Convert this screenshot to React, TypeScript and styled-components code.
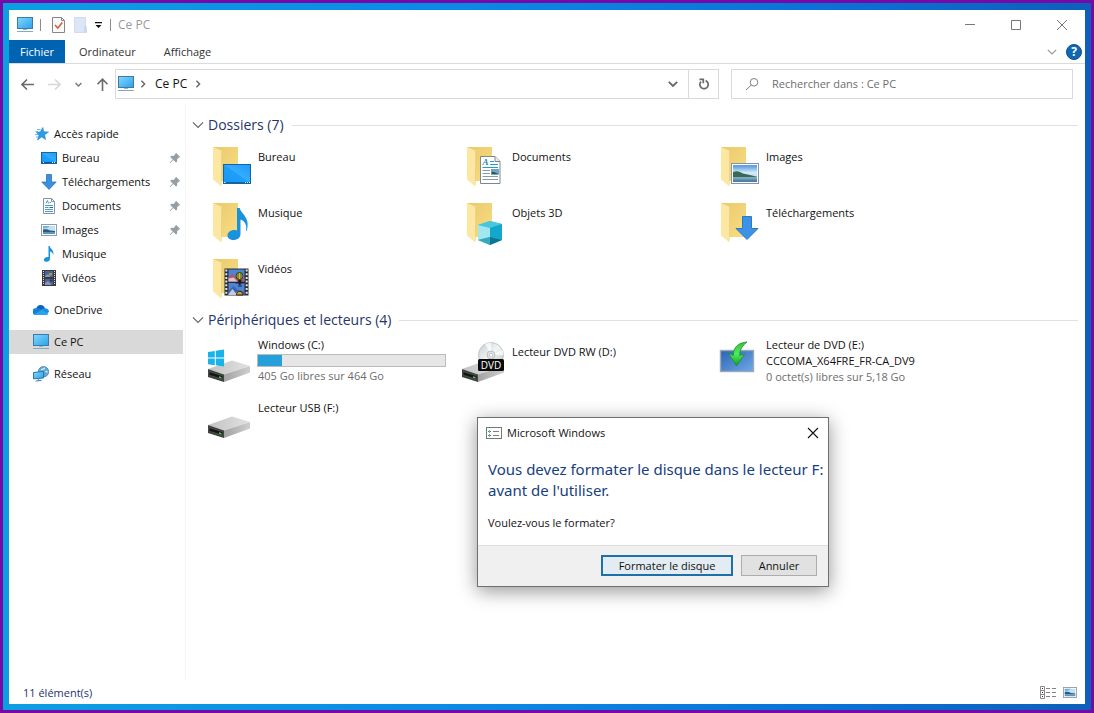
import React from "react";
import styled, { createGlobalStyle } from "styled-components";

const GlobalStyle = createGlobalStyle`
  *, *::before, *::after { box-sizing: border-box; }
  body { margin: 0; }
  body, button, input { font-family: "Open Sans", "Noto Sans", sans-serif; font-size: 11px; line-height: 16px; color: #111; }
  button { border: 0; padding: 0; background: none; }
  h1, h2, p, ul { margin: 0; padding: 0; font-weight: 400; }
  svg { display: block; flex: none; }
`;

/* ---------- frame ---------- */

const Desktop = styled.div`
  display: flex;
  min-height: 100vh;
  padding: 7px 6px 6px;
  border: 3px solid #750aa6;
  background: linear-gradient(90deg, #0b9fe2 0%, #0a8be6 40%, #0a72d8 75%, #0d5fba 100%);
`;

const Window = styled.main`
  position: relative;
  display: flex;
  flex: 1;
  flex-direction: column;
  min-width: 0;
  background: #fff;
`;

const TitleBar = styled.header`
  display: flex;
  align-items: center;
  height: 30px;
  padding-left: 8px;
`;

const TitleSeparator = styled.span`
  width: 1px;
  height: 12px;
  background: #8c8c8c;
`;

const AppMark = styled.span`
  padding-right: 7px;
`;

const QuickTools = styled.div`
  display: flex;
  align-items: center;
  gap: 7px;
  padding: 0 7px 0 11px;
`;

const WindowTitle = styled.h1`
  flex: 1;
  padding-left: 7px;
  font-size: 12px;
  color: #999;
`;

const CaptionButton = styled.button`
  display: grid;
  place-items: center;
  width: 46px;
  height: 28px;
  color: #777;
`;

const Ribbon = styled.nav`
  display: flex;
  align-items: stretch;
  height: 24px;
  border-bottom: 1px solid #dadbdc;
`;

const RibbonTab = styled.button<{ $active?: boolean }>`
  min-width: 56px;
  padding: ${(p) => (p.$active ? "0" : "0 14px")};
  background: ${(p) => (p.$active ? "#0063b1" : "transparent")};
  color: ${(p) => (p.$active ? "#fff" : "#333")};
`;

const RibbonEnd = styled.div`
  display: flex;
  align-items: center;
  gap: 9px;
  margin-left: auto;
  padding-right: 3px;
`;

/* ---------- address row ---------- */

const AddressRow = styled.div`
  display: flex;
  align-items: center;
  gap: 12px;
  height: 40px;
  padding: 0 12px;
`;

const NavButtons = styled.div`
  display: flex;
  align-items: center;
  gap: 14px;
  margin-right: -6px;
`;

const AddressBox = styled.div`
  display: flex;
  flex: 1;
  align-items: center;
  height: 30px;
  padding-left: 2px;
  border: 1px solid #d9d9d9;
`;

const CrumbMark = styled.span`
  padding-left: 5px;
`;

const Crumb = styled.button`
  padding: 0 2px 0 8px;
  font-size: 12px;
`;

const AddressSpacer = styled.span`
  flex: 1;
`;

const AddressAction = styled.button<{ $divided?: boolean }>`
  display: grid;
  place-items: center;
  width: 30px;
  height: 28px;
  border-left: ${(p) => (p.$divided ? "1px solid #d9d9d9" : "0")};
`;

const SearchBox = styled.label`
  display: flex;
  flex: 0 1 342px;
  align-items: center;
  gap: 12px;
  height: 30px;
  padding-left: 13px;
  border: 1px solid #d9d9d9;
`;

const SearchInput = styled.input`
  flex: 1;
  min-width: 0;
  padding: 0;
  border: 0;
  outline: 0;
  background: transparent;
  &::placeholder { color: #6d6d6d; opacity: 1; }
`;

/* ---------- body ---------- */

const Body = styled.div`
  display: flex;
  flex: 1;
`;

const Sidebar = styled.aside`
  flex: none;
  width: 177px;
  padding: 18px 2px 0 0;
  border-right: 1px solid #f5f5f5;
`;

const SideGroup = styled.ul`
  margin-bottom: 8px;
  list-style: none;
`;

const SideLink = styled.a<{ $nested?: boolean; $selected?: boolean }>`
  display: flex;
  align-items: center;
  gap: 5px;
  height: 24px;
  padding: 0 2px 0 ${(p) => (p.$nested ? "32px" : "24px")};
  background: ${(p) => (p.$selected ? "#d9d9d9" : "transparent")};
  color: #111;
  text-decoration: none;
`;

const SideLabel = styled.span`
  flex: 1;
  white-space: nowrap;
`;

const Content = styled.section`
  flex: 1;
  min-width: 0;
  padding: 11px 7px 0 6px;
`;

const Group = styled.section`
  margin-bottom: 1px;
`;

const GroupHeader = styled.h2`
  display: flex;
  align-items: center;
  gap: 4px;
  height: 20px;
  margin-bottom: 6px;
  font-size: 14px;
  line-height: 20px;
  color: #26346b;
  &::after {
    content: "";
    flex: 1;
    height: 1px;
    margin-left: 4px;
    background: #e0e0e0;
  }
`;

const TileGrid = styled.ul`
  display: grid;
  grid-template-columns: repeat(auto-fill, 254px);
  grid-auto-rows: 56px;
  padding-left: 14px;
  list-style: none;
`;

const Tile = styled.li`
  display: flex;
  gap: 4px;
`;

const TileText = styled.div<{ $multi?: boolean }>`
  flex: 1;
  padding: ${(p) => (p.$multi ? "1px" : "8px")} 12px 0 0;
`;

const TileLine = styled.p<{ $muted?: boolean }>`
  color: ${(p) => (p.$muted ? "#6d6d6d" : "#111")};
  white-space: nowrap;
`;

const Meter = styled.div`
  width: 189px;
  height: 13px;
  margin: 1px 0 1px -1px;
  border: 1px solid #bcbcbc;
  background: #e6e6e6;
`;

const MeterFill = styled.div`
  height: 100%;
  background: #26a0da;
`;

const StatusBar = styled.footer`
  display: flex;
  align-items: center;
  gap: 7px;
  height: 23px;
  padding: 0 8px 0 14px;
  color: #26346b;
`;

const StatusText = styled.span`
  flex: 1;
`;

/* ---------- dialog ---------- */

const Dialog = styled.div`
  position: absolute;
  top: 407px;
  left: 468px;
  width: 352px;
  border: 1px solid #6f6f6f;
  background: #fff;
  box-shadow: 0 4px 18px rgba(0, 0, 0, 0.42);
`;

const DialogTitle = styled.div`
  display: flex;
  align-items: center;
  gap: 5px;
  height: 30px;
  padding: 0 8px;
`;

const DialogTitleText = styled.span`
  flex: 1;
`;

const DialogBody = styled.div`
  display: flex;
  flex-direction: column;
  gap: 14px;
  height: 97px;
  padding: 11px 0 0 10px;
`;

const DialogInstruction = styled.h2`
  font-family: "Noto Sans", "Open Sans", sans-serif;
  font-size: 15px;
  line-height: 21px;
  color: #17407f;
`;

const DialogFooter = styled.div`
  display: flex;
  justify-content: flex-end;
  gap: 8px;
  padding: 9px 11px 10px;
  border-top: 1px solid #dfdfdf;
  background: #f0f0f0;
`;

const DialogButton = styled.button<{ $primary?: boolean }>`
  width: ${(p) => (p.$primary ? "132px" : "76px")};
  height: 21px;
  border: ${(p) => (p.$primary ? "2px solid #1f6fa8" : "1px solid #adadad")};
  background: ${(p) => (p.$primary ? "#e3ecf3" : "#e1e1e1")};
`;

/* ---------- icons ---------- */

const HiddenDefs = styled.svg`
  position: absolute;
`;

const SharedDefs = () => (
  <HiddenDefs width="0" height="0" aria-hidden="true">
    <defs>
      <linearGradient id="screen" x1="0" y1="0" x2="1" y2="1">
        <stop offset="0" stopColor="#8ad6fb" />
        <stop offset="0.5" stopColor="#55bdf5" />
        <stop offset="1" stopColor="#2f9fe6" />
      </linearGradient>
      <linearGradient id="desk" x1="0" y1="1" x2="1" y2="0">
        <stop offset="0" stopColor="#1597f4" />
        <stop offset="0.5" stopColor="#1e9ffc" />
        <stop offset="0.52" stopColor="#35acff" />
        <stop offset="1" stopColor="#1c9cfb" />
      </linearGradient>
      <linearGradient id="folderBack" x1="0" y1="0" x2="1" y2="1">
        <stop offset="0" stopColor="#e9c96c" />
        <stop offset="1" stopColor="#fadd83" />
      </linearGradient>
      <linearGradient id="folderFlap" x1="0" y1="0" x2="1" y2="1">
        <stop offset="0" stopColor="#fde79f" />
        <stop offset="1" stopColor="#fbe7a6" />
      </linearGradient>
      <linearGradient id="sky" x1="0" y1="0" x2="0" y2="1">
        <stop offset="0" stopColor="#4a93dc" />
        <stop offset="0.45" stopColor="#d4ebf8" />
        <stop offset="1" stopColor="#a9cfe6" />
      </linearGradient>
      <linearGradient id="sea" x1="0" y1="0" x2="0" y2="1">
        <stop offset="0" stopColor="#8db8cf" />
        <stop offset="1" stopColor="#3b6f96" />
      </linearGradient>
      <linearGradient id="driveTop" x1="0" y1="0" x2="1" y2="0">
        <stop offset="0" stopColor="#c2c2c2" />
        <stop offset="1" stopColor="#e2e2e2" />
      </linearGradient>
      <linearGradient id="driveSide" x1="0" y1="0" x2="1" y2="0">
        <stop offset="0" stopColor="#a2a2a2" />
        <stop offset="1" stopColor="#cfcfcf" />
      </linearGradient>
      <linearGradient id="disc" x1="0" y1="0" x2="1" y2="1">
        <stop offset="0" stopColor="#c4cccd" />
        <stop offset="0.5" stopColor="#f2f5f5" />
        <stop offset="1" stopColor="#b3c4c2" />
      </linearGradient>
      <linearGradient id="setup" x1="0" y1="0" x2="1" y2="1">
        <stop offset="0" stopColor="#2c63b4" />
        <stop offset="1" stopColor="#6fa9e8" />
      </linearGradient>
      <linearGradient id="green" x1="0" y1="0" x2="0" y2="1">
        <stop offset="0" stopColor="#35c13a" />
        <stop offset="0.5" stopColor="#4fec58" />
        <stop offset="1" stopColor="#0f9a28" />
      </linearGradient>
    </defs>
  </HiddenDefs>
);

const PcIcon = () => (
  <svg width="16" height="16" viewBox="0 0 16 16" aria-hidden="true">
    <rect x="0.5" y="0.5" width="15" height="11" fill="url(#screen)" stroke="#3d7ba6" />
    <path d="M6 12h4v1H6z" fill="#9fb4c2" />
    <path d="M0 14h16v1H0z" fill="#98a5ae" />
    <path d="M3 14h10v.5H3z" fill="#5bb5e8" />
  </svg>
);

const PropertiesIcon = () => (
  <svg width="14" height="16" viewBox="0 0 14 16" aria-hidden="true">
    <path d="M.5.5h9l3 3v12H.5z" fill="#fbfbfb" stroke="#868686" />
    <path d="M9.5.5v3h3" fill="none" stroke="#868686" />
    <path d="M3 8l2.800 3L10.300 5.500" fill="none" stroke="#d2603a" strokeWidth="1.600" />
  </svg>
);

const NewFolderIcon = () => (
  <svg width="14" height="16" viewBox="0 0 14 16" aria-hidden="true">
    <path d="M1.500.5h11V9l1 1v5.500h-12z" fill="#dbe6f6" stroke="#d0dbee" />
    <path d="M12 9v6" stroke="#bccbe4" />
  </svg>
);

const CustomizeIcon = () => (
  <svg width="9" height="8" viewBox="0 0 9 8" aria-hidden="true">
    <path d="M1 1h7v1.200H1zM1.500 4h6L4.500 7z" fill="#111" />
  </svg>
);

const Chevron = ({ color = "#666", size = 9, dir = "down", weight = 1.2 }: { color?: string; size?: number; dir?: "down" | "right"; weight?: number }) => (
  <svg width={size} height={size} viewBox="0 0 10 10" fill="none" stroke={color} strokeWidth={weight} aria-hidden="true">
    <path d={dir === "down" ? "M.8 2.800L5 7l4.200-4.200" : "M3 1l4 4-4 4"} />
  </svg>
);

const Arrow = ({ color, dir }: { color: string; dir: "left" | "right" | "up" }) => (
  <svg width="13" height="13" viewBox="0 0 13 13" fill="none" stroke={color} strokeWidth="1.600" aria-hidden="true">
    {dir === "left" && <path d="M13 6.500H1.200M6 1.500l-5 5 5 5" />}
    {dir === "right" && <path d="M0 6.500h11.800M7 1.500l5 5-5 5" />}
    {dir === "up" && <path d="M6.500 13V1.200M1.500 6.200l5-5 5 5" />}
  </svg>
);

const RefreshIcon = () => (
  <svg width="12" height="12" viewBox="0 0 12 12" fill="none" stroke="#6a6a6a" strokeWidth="1.700" aria-hidden="true">
    <path d="M7.600 2.600A4.200 4.200 0 1 1 3 3.600" />
    <path d="M1.500 1.300h3.800v3.900" />
  </svg>
);

const SearchIcon = () => (
  <svg width="15" height="14" viewBox="0 0 15 14" fill="none" stroke="#808080" aria-hidden="true">
    <circle cx="9" cy="5.300" r="3.800" />
    <path d="M6.300 8L1 13" />
  </svg>
);

const HelpIcon = () => (
  <svg width="16" height="16" viewBox="0 0 16 16" aria-hidden="true">
    <circle cx="8" cy="8" r="7.500" fill="#1167b1" stroke="#0d4f8f" />
    <text x="8" y="12" textAnchor="middle" fontSize="12" fontWeight="700" fill="#fff">?</text>
  </svg>
);

const StarIcon = () => (
  <svg width="16" height="16" viewBox="0 0 16 16" aria-hidden="true">
    <path d="M9.800 1.500l1 4.200 4.700.3-3.800 2.800.8 4.700-3.800-2.600L4.500 14l1.400-4.700L3.500 6.500l3.800-.7z" fill="#2f9be0" stroke="#2389cc" strokeWidth=".6" />
    <path d="M4 3.500h3.500M2.500 5.500H5M2 8.500h3M3 11h2" stroke="#6bbcee" />
  </svg>
);

const DesktopIcon = () => (
  <svg width="16" height="16" viewBox="0 0 16 16" aria-hidden="true">
    <rect x="0.500" y="2.500" width="15" height="11" fill="url(#desk)" stroke="#14659f" />
    <path d="M1 12.500h14" stroke="#0f5a96" />
    <path d="M2 12.500h1M11 12.500h1M13 12.500h1" stroke="#d7efff" />
  </svg>
);

const DownloadIcon = () => (
  <svg width="16" height="16" viewBox="0 0 16 16" aria-hidden="true">
    <path d="M5.500.5h5V8h4.700L8 15.400.8 8h4.700z" fill="#3b8fdc" stroke="#2b74bd" strokeWidth=".8" />
  </svg>
);

const DocumentArt = () => (
  <g>
    <path d="M.5.500h14.500l5 5V27.500H.5z" fill="#fff" stroke="#7d8790" />
    <path d="M15 .5v5h5" fill="#e8ecef" stroke="#7d8790" />
    <text x="2.500" y="9" fontSize="9" fontStyle="italic" fontWeight="700" fontFamily="Liberation Serif, serif" fill="#2a83c0">A</text>
    <path d="M10 5.500h4M10 8.500h8M2.500 11.500h15.500" stroke="#2a9ac9" strokeWidth="1.200" />
    <path d="M2.500 14.500h7.500M2.500 17.500h7.500M2.500 20.500h15.500M2.500 23.500h15.500" stroke="#8a98a4" />
    <rect x="11.500" y="13.500" width="7" height="5" fill="#6ba7d6" stroke="#4a7fae" strokeWidth=".6" />
    <path d="M11.800 18v-2.500l3 .8 3.500 1.700z" fill="#2d5a4f" />
  </g>
);

const DocumentIcon = () => (
  <svg width="16" height="16" viewBox="0 0 16 16" aria-hidden="true">
    <path d="M2.500.5h8l3 3v12h-11z" fill="#fff" stroke="#87929b" />
    <path d="M10.500.5v3h3" fill="none" stroke="#87929b" />
    <path d="M5 5.500L6.500 2.500 7.500 5.500M8.500 4.500h1.500M4 7.500h8M4 9.500h3.500M4 11.500h8M4 13.500h8" fill="none" stroke="#4a9fcd" />
    <path d="M8.500 9.500H12" stroke="#3b5f7c" />
  </svg>
);

const PictureArt = ({ w, h }: { w: number; h: number }) => (
  <svg width={w} height={h} viewBox="0 0 28 20" preserveAspectRatio="none">
    <rect x="0.500" y="0.500" width="27" height="19" fill="#fff" stroke="#8394a5" />
    <rect x="2" y="2" width="24" height="16" fill="url(#sky)" />
    <path d="M2 8.500c4-1.500 7-.5 10 1.500l7 1.500 7 1.500v1H2z" fill="#3a6a55" />
    <path d="M2 13.500h24V18H2z" fill="url(#sea)" />
  </svg>
);

const SmallPicture = ({ w, h }: { w: number; h: number }) => (
  <svg width={w} height={h} viewBox="0 0 16 12" preserveAspectRatio="none" aria-hidden="true">
    <rect x="0.500" y="0.500" width="15" height="11" fill="#fff" stroke="#8f9dab" />
    <rect x="2" y="2" width="12" height="8" fill="#bfe0f5" />
    <path d="M2 2h7L6 4 2 4.500z" fill="#6fb2e6" />
    <path d="M2 5.500c3-.5 5 0 7 1l5 .5v1H2z" fill="#30587a" />
    <path d="M2 8h12v2H2z" fill="#5c93bb" />
  </svg>
);

const PictureIcon = () => <SmallPicture w={16} h={12} />;

const MusicIcon = () => (
  <svg width="16" height="16" viewBox="0 0 16 16" aria-hidden="true">
    <path d="M7.500 0h1.300c.3 3 4.800 4 3.300 9.200-.2-2.200-1.300-3.400-3.100-3.700v7.200c0 1.800-1.500 3.100-3.400 3.100-1.700 0-2.700-.9-2.700-2.100 0-1.500 1.700-2.900 4.600-2.700z" fill="#1a93dd" />
  </svg>
);

const FilmArt = () => (
  <g>
    <path d="M.5.500h24v27H.5z" fill="#2b2b2b" />
    <path d="M2.300 1.500v26M22.700 1.500v26" stroke="#e5e5e5" strokeWidth="2" strokeDasharray="2 1.700" />
    <path d="M4.500 1.500h16v12h-16z" fill="#4c84d6" />
    <path d="M4.500 15h16v12h-16z" fill="#4c84d6" />
    <path d="M4.500 9l4-3 4 4 8 1v2.500h-16z" fill="#b6566a" />
    <path d="M4.500 10.500l5-1 4 4h-9z" fill="#d9c7ce" />
    <path d="M4.500 23l5-5 4 4 7 2v3h-16z" fill="#3c64ac" />
    <path d="M4.500 26l4-5 3 4 3-1v3h-10z" fill="#c7c9db" />
    <circle cx="15.500" cy="8" r="3.500" fill="#e0b92c" stroke="#2f3b1c" />
    <path d="M14 4.500v7M17 4.500v7" stroke="#2d5c23" />
    <path d="M14 12h3.500l-1 5h-1.500z" fill="#18202c" />
    <path d="M11.500 15h8M14 18h4" stroke="#18202c" strokeWidth="1.200" />
    <path d="M12.500 27c0-5 6.500-5 6.500 0z" fill="#dd9a2c" stroke="#222" />
  </g>
);

const VideoIcon = () => (
  <svg width="16" height="16" viewBox="0 0 16 16" aria-hidden="true">
    <path d="M1 0h14v16H1z" fill="#3a3a3a" />
    <path d="M2.500 1v14M13.500 1v14" stroke="#ddd" strokeDasharray="1 1" />
    <path d="M4 1h8v6H4zM4 9h8v6H4z" fill="#4a62a0" />
    <path d="M4 6l3-2 2 2v1H4zM4 13l3-2 3 3v1H4z" fill="#8794bf" />
    <path d="M8 3h3v2.500H8z" fill="#a59a3c" />
    <path d="M9 9.500h2.500v2H9z" fill="#2a3350" />
  </svg>
);

const CloudIcon = () => (
  <svg width="16" height="16" viewBox="0 0 16 16" aria-hidden="true">
    <path d="M3 7.200C3.600 4.600 5.300 3 7.600 3c2 0 3.600 1.200 4.300 3.200l-3.300 4.300-6-2z" fill="#0d62b8" />
    <path d="M3.500 6.300c2-.4 3.500.3 5.300 1.600l-6.600 5A3.300 3.300 0 0 1 3.500 6.300z" fill="#1580d8" />
    <path d="M8.200 8c1-1.500 2.700-2.200 4.400-1.700 2.200.3 3.400 1.800 3.400 3.600L13 12z" fill="#1a8fe4" />
    <path d="M1.600 12.200L8.700 7.800l6.700 3.900c-.5.800-1.300 1.300-2.400 1.300H3.500c-.8 0-1.400-.3-1.900-.8z" fill="#2aa4ee" />
  </svg>
);

const NetworkIcon = () => (
  <svg width="16" height="16" viewBox="0 0 16 16" aria-hidden="true">
    <circle cx="10.500" cy="5.700" r="5.200" fill="#5fa9d3" stroke="#4387b3" strokeWidth=".8" />
    <path d="M8 3.500c2 .3 2.500-1 4-1.300M12.500 5c1 1 1.500.8 2.200 1" fill="none" stroke="#d3ecf8" strokeWidth="1.300" />
    <path d="M.5 6.500l10-1v6.500l-10 .800z" fill="url(#screen)" stroke="#2675ab" />
    <path d="M5.500 12.500v2M2.500 15l6-.6" stroke="#4d92bf" strokeWidth="1.200" />
  </svg>
);

const PinIcon = () => (
  <svg width="12" height="12" viewBox="0 0 12 12" aria-hidden="true">
    <path d="M7 .8L11.200 5l-1.300.5-1.800 1.800.1 2.400-1.200.9-2.600-2.600L1 11.300l-.5-.5L3.800 7.500 1.200 5l1-1.200 2.400.1 1.800-1.800z" fill="#959fa6" />
  </svg>
);

const FolderTile = ({ children }: { children: React.ReactNode }) => (
  <svg width="48" height="48" viewBox="0 0 48 48" aria-hidden="true">
    <path d="M7 6h25v34H14z" fill="url(#folderBack)" />
    <path d="M7 6l9 4v32.500l-.8 3L7 38.500z" fill="url(#folderFlap)" />
    <path d="M15.500 10v30" stroke="#e8cd80" strokeWidth=".8" />
    {children}
  </svg>
);

const BureauTile = () => (
  <FolderTile>
    <rect x="17.500" y="23.500" width="27" height="19" fill="url(#desk)" stroke="#15649b" />
    <path d="M18 41.500h26" stroke="#12639e" />
    <path d="M18 41.500h1.500M39 41.500h1M41 41.500h1M43 41.500h1" stroke="#d8f0ff" />
  </FolderTile>
);

const DocumentsTile = () => (
  <FolderTile>
    <g transform="translate(20 15)"><DocumentArt /></g>
  </FolderTile>
);

const ImagesTile = () => (
  <FolderTile>
    <g transform="translate(17 22)"><PictureArt w={28} h={21} /></g>
  </FolderTile>
);

const MusiqueTile = () => (
  <FolderTile>
    <path d="M31 11h2.800c.5 5 10.500 9 7.300 21.500-.2 1-.8 1.500-1.200 2 1.300-6.500-1-10.500-5.400-12V37c0 3.800-3.200 6-7 6-3.500 0-6-1.700-6-4.500 0-3.500 4.300-6.500 9.500-5z" fill="#1a93dd" />
  </FolderTile>
);

const Objets3dTile = () => (
  <FolderTile>
    <path d="M18 28l12-4 12 3v16l-12 5-12-5z" fill="#35c3dd" />
    <path d="M18 28l12-4 12 3-12 4z" fill="#48c6dc" />
    <path d="M18 28l12 3v9l-12 3z" fill="#a2e6ee" />
    <path d="M30 31l12-4v16l-12-3z" fill="#12a8cd" />
    <path d="M18 43l12-3v8z" fill="#35a9bd" />
    <path d="M30 40l12 3-12 5z" fill="#0d7590" />
  </FolderTile>
);

const DownloadsTile = () => (
  <FolderTile>
    <path d="M28.500 19.500h9v12h6.500L33 42.500l-11-11h6.500z" fill="#3b92e6" stroke="#2f78c2" />
  </FolderTile>
);

const VideosTile = () => (
  <FolderTile>
    <g transform="translate(18 15)"><FilmArt /></g>
  </FolderTile>
);

const DriveArt = () => (
  <g>
    <path d="M2 33l24-8.500 18 5.500-26 8.500z" fill="url(#driveTop)" />
    <path d="M2 33l16 5.500V46L2 41z" fill="#3b3d3c" />
    <path d="M3 35.500l14 4.300v3.700L3 39.200z" fill="#141615" stroke="#666" strokeWidth=".6" />
    <path d="M18 38.500l26-8.500v6.500L18 46z" fill="url(#driveSide)" />
    <path d="M13 40.300l2.500.7v1.400l-2.500-.7z" fill="#49d064" />
  </g>
);

const WindowsDriveTile = () => (
  <svg width="48" height="48" viewBox="0 0 48 48" aria-hidden="true">
    <DriveArt />
    <path d="M2 16l6.800-1v6.600H2zM9.800 14.800L18 13.500v8.100H9.800zM2 22.600h6.800v6.600L2 28.200zM9.800 22.600H18v7.900l-8.200-1.200z" fill="#19b3ea" />
  </svg>
);

const UsbDriveTile = () => (
  <svg width="48" height="48" viewBox="0 0 48 48" aria-hidden="true"><DriveArt /></svg>
);

const DvdDriveTile = () => (
  <svg width="48" height="48" viewBox="0 0 48 48" aria-hidden="true">
    <DriveArt />
    <circle cx="31" cy="19" r="12.500" fill="url(#disc)" stroke="#b5bcbd" strokeWidth=".8" />
    <path d="M31 19l-6-11a12.500 12.500 0 0 1 6-1.500zM31 19l11.500-5a12.500 12.500 0 0 1 1 5z" fill="#fff" opacity=".7" />
    <circle cx="31" cy="19" r="4" fill="#e1e5e5" stroke="#a7afb0" strokeWidth=".7" />
    <circle cx="31" cy="19" r="1.800" fill="#fff" stroke="#a7afb0" strokeWidth=".6" />
    <rect x="18" y="23" width="26" height="12" rx="1.500" fill="#0b0b0b" />
    <text x="31" y="33" textAnchor="middle" fontSize="10" fill="#fff">DVD</text>
  </svg>
);

const SetupDriveTile = () => (
  <svg width="48" height="48" viewBox="0 0 48 48" aria-hidden="true">
    <rect x="6.500" y="14.500" width="33" height="21" fill="url(#setup)" stroke="#9aa8b8" strokeWidth="1.400" />
    <path d="M33 6c-9 .5-14 6-13.700 13.500l-4.800-2.500L22.500 30 30.500 18l-4.700 1.500c-.3-5 2-9.500 7.200-13.500z" fill="url(#green)" stroke="#168f2b" strokeWidth=".8" />
  </svg>
);

const DialogIcon = () => (
  <svg width="16" height="14" viewBox="0 0 16 14" fill="none" aria-hidden="true">
    <rect x="0.500" y="1.500" width="15" height="11" stroke="#6f7b74" />
    <path d="M2 5.500h3M2 9.500h3" stroke="#3f8f58" />
    <path d="M3.500 4v3M3.500 8v3" stroke="#7cb68d" />
    <path d="M7 5.500h6M7 9.500h6" stroke="#7b857f" />
  </svg>
);

const DetailsViewIcon = () => (
  <svg width="16" height="13" viewBox="0 0 16 13" fill="none" aria-hidden="true">
    <path d="M.5.500h4v12h-4zM.5 4.500h4M.5 8.500h4" stroke="#8a8a8a" />
    <path d="M2 2.500h1M2 6.500h1M2 10.500h1" stroke="#333" />
    <path d="M6 2.500h4M12 2.500h4M6 6.500h4M12 6.500h4M6 10.500h4M12 10.500h4" stroke="#8b7e84" />
  </svg>
);

/* ---------- data ---------- */

const quickAccess = [
  { label: "Bureau", Icon: DesktopIcon, pinned: true },
  { label: "Téléchargements", Icon: DownloadIcon, pinned: true },
  { label: "Documents", Icon: DocumentIcon, pinned: true },
  { label: "Images", Icon: PictureIcon, pinned: true },
  { label: "Musique", Icon: MusicIcon, pinned: false },
  { label: "Vidéos", Icon: VideoIcon, pinned: false },
];

const roots = [
  { label: "OneDrive", Icon: CloudIcon, selected: false },
  { label: "Ce PC", Icon: PcIcon, selected: true },
  { label: "Réseau", Icon: NetworkIcon, selected: false },
];

const folders = [
  { label: "Bureau", Icon: BureauTile },
  { label: "Documents", Icon: DocumentsTile },
  { label: "Images", Icon: ImagesTile },
  { label: "Musique", Icon: MusiqueTile },
  { label: "Objets 3D", Icon: Objets3dTile },
  { label: "Téléchargements", Icon: DownloadsTile },
  { label: "Vidéos", Icon: VideosTile },
];

type Drive = { lines: string[]; Icon: React.FC; used?: number; free?: string };

const drives: Drive[] = [
  { lines: ["Windows (C:)"], Icon: WindowsDriveTile, used: 59 / 464, free: "405 Go libres sur 464 Go" },
  { lines: ["Lecteur DVD RW (D:)"], Icon: DvdDriveTile },
  { lines: ["Lecteur de DVD (E:)", "CCCOMA_X64FRE_FR-CA_DV9"], Icon: SetupDriveTile, free: "0 octet(s) libres sur 5,18 Go" },
  { lines: ["Lecteur USB (F:)"], Icon: UsbDriveTile },
];

export default function App() {
  return (
    <Desktop>
      <GlobalStyle />
      <SharedDefs />
      <Window>
        <TitleBar>
          <AppMark><PcIcon /></AppMark>
          <TitleSeparator />
          <QuickTools>
            <button type="button" aria-label="Propriétés"><PropertiesIcon /></button>
            <button type="button" aria-label="Nouveau dossier"><NewFolderIcon /></button>
            <button type="button" aria-label="Personnaliser"><CustomizeIcon /></button>
          </QuickTools>
          <TitleSeparator />
          <WindowTitle>Ce PC</WindowTitle>
          <CaptionButton type="button" aria-label="Réduire">
            <svg width="10" height="10" viewBox="0 0 10 10" stroke="currentColor"><path d="M0 4.500h10" /></svg>
          </CaptionButton>
          <CaptionButton type="button" aria-label="Agrandir">
            <svg width="10" height="10" viewBox="0 0 10 10" fill="none" stroke="currentColor"><path d="M.5.500h9v9h-9z" /></svg>
          </CaptionButton>
          <CaptionButton type="button" aria-label="Fermer">
            <svg width="10" height="10" viewBox="0 0 10 10" stroke="currentColor"><path d="M0 0l10 10M10 0L0 10" /></svg>
          </CaptionButton>
        </TitleBar>

        <Ribbon aria-label="Ruban">
          <RibbonTab type="button" $active>Fichier</RibbonTab>
          <RibbonTab type="button">Ordinateur</RibbonTab>
          <RibbonTab type="button">Affichage</RibbonTab>
          <RibbonEnd>
            <button type="button" aria-label="Développer le ruban"><Chevron color="#999" size={10} /></button>
            <button type="button" aria-label="Aide"><HelpIcon /></button>
          </RibbonEnd>
        </Ribbon>

        <AddressRow>
          <NavButtons>
            <button type="button" aria-label="Précédent"><Arrow dir="left" color="#6a6a6a" /></button>
            <button type="button" aria-label="Suivant"><Arrow dir="right" color="#d8d8d8" /></button>
            <button type="button" aria-label="Emplacements récents"><Chevron size={7} weight={2} color="#777" /></button>
            <button type="button" aria-label="Dossier parent"><Arrow dir="up" color="#6a6a6a" /></button>
          </NavButtons>
          <AddressBox>
            <PcIcon />
            <CrumbMark><Chevron dir="right" size={8} weight={1.8} /></CrumbMark>
            <Crumb type="button">Ce PC</Crumb>
            <CrumbMark><Chevron dir="right" size={8} weight={1.8} /></CrumbMark>
            <AddressSpacer />
            <AddressAction type="button" aria-label="Emplacements précédents"><Chevron color="#666" size={10} weight={1.8} /></AddressAction>
            <AddressAction type="button" aria-label="Actualiser" $divided><RefreshIcon /></AddressAction>
          </AddressBox>
          <SearchBox>
            <SearchIcon />
            <SearchInput type="text" aria-label="Rechercher" placeholder="Rechercher dans : Ce PC" />
          </SearchBox>
        </AddressRow>

        <Body>
          <Sidebar>
            <SideGroup>
              <li><SideLink href="#rapide"><StarIcon /><SideLabel>Accès rapide</SideLabel></SideLink></li>
              {quickAccess.map(({ label, Icon, pinned }) => (
                <li key={label}>
                  <SideLink href="#dossier" $nested>
                    <Icon />
                    <SideLabel>{label}</SideLabel>
                    {pinned && <PinIcon />}
                  </SideLink>
                </li>
              ))}
            </SideGroup>
            {roots.map(({ label, Icon, selected }) => (
              <SideGroup key={label}>
                <li><SideLink href="#racine" $selected={selected}><Icon /><SideLabel>{label}</SideLabel></SideLink></li>
              </SideGroup>
            ))}
          </Sidebar>

          <Content>
            <Group>
              <GroupHeader><Chevron size={12} weight={1} />Dossiers (7)</GroupHeader>
              <TileGrid>
                {folders.map(({ label, Icon }) => (
                  <Tile key={label}>
                    <Icon />
                    <TileText><TileLine>{label}</TileLine></TileText>
                  </Tile>
                ))}
              </TileGrid>
            </Group>
            <Group>
              <GroupHeader><Chevron size={12} weight={1} />Périphériques et lecteurs (4)</GroupHeader>
              <TileGrid>
                {drives.map(({ lines, Icon, used, free }) => (
                  <Tile key={lines[0]}>
                    <Icon />
                    <TileText $multi={free !== undefined}>
                      {lines.map((line) => <TileLine key={line}>{line}</TileLine>)}
                      {used !== undefined && (
                        <Meter><MeterFill style={{ width: `${used * 100}%` }} /></Meter>
                      )}
                      {free && <TileLine $muted>{free}</TileLine>}
                    </TileText>
                  </Tile>
                ))}
              </TileGrid>
            </Group>
          </Content>
        </Body>

        <StatusBar>
          <StatusText>11 élément(s)</StatusText>
          <button type="button" aria-label="Détails"><DetailsViewIcon /></button>
          <button type="button" aria-label="Grandes icônes"><SmallPicture w={14} h={11} /></button>
        </StatusBar>

        <Dialog role="dialog" aria-label="Microsoft Windows">
          <DialogTitle>
            <DialogIcon />
            <DialogTitleText>Microsoft Windows</DialogTitleText>
            <button type="button" aria-label="Fermer la boîte de dialogue">
              <svg width="14" height="14" viewBox="0 0 14 14" stroke="#111" strokeWidth="1.100"><path d="M2 2l10 10M12 2L2 12" /></svg>
            </button>
          </DialogTitle>
          <DialogBody>
            <DialogInstruction>Vous devez formater le disque dans le lecteur F: avant de l'utiliser.</DialogInstruction>
            <p>Voulez-vous le formater?</p>
          </DialogBody>
          <DialogFooter>
            <DialogButton type="button" $primary>Formater le disque</DialogButton>
            <DialogButton type="button">Annuler</DialogButton>
          </DialogFooter>
        </Dialog>
      </Window>
    </Desktop>
  );
}
